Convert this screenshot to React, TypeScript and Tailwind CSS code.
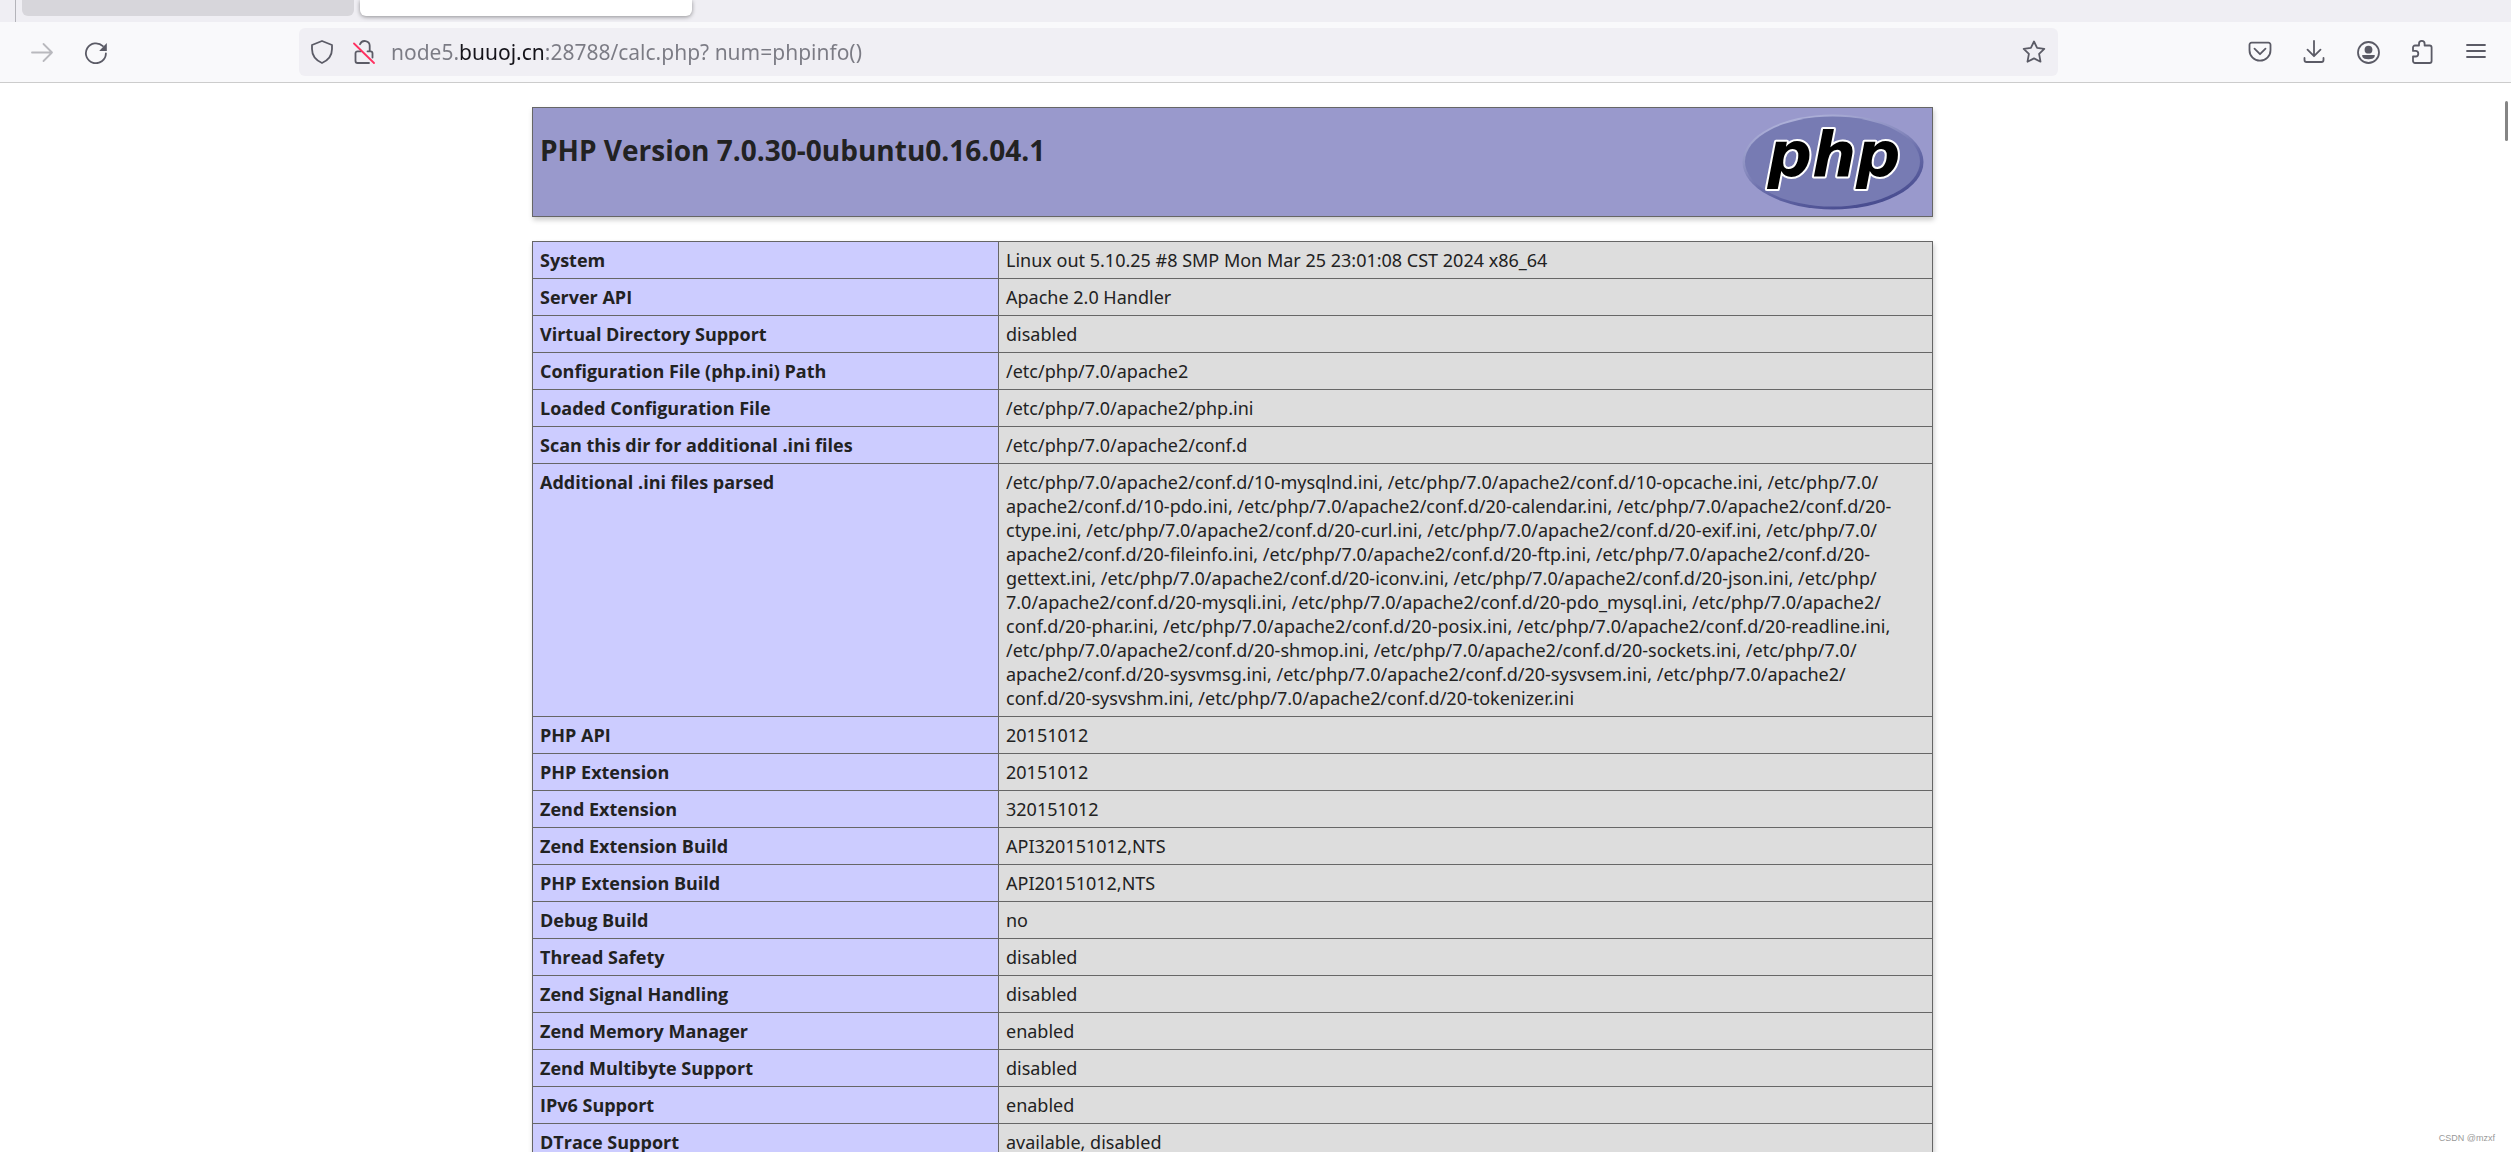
import type { ReactNode } from 'react';

const INI_LINES = [
  '/etc/php/7.0/apache2/conf.d/10-mysqlnd.ini, /etc/php/7.0/apache2/conf.d/10-opcache.ini, /etc/php/7.0/',
  'apache2/conf.d/10-pdo.ini, /etc/php/7.0/apache2/conf.d/20-calendar.ini, /etc/php/7.0/apache2/conf.d/20-',
  'ctype.ini, /etc/php/7.0/apache2/conf.d/20-curl.ini, /etc/php/7.0/apache2/conf.d/20-exif.ini, /etc/php/7.0/',
  'apache2/conf.d/20-fileinfo.ini, /etc/php/7.0/apache2/conf.d/20-ftp.ini, /etc/php/7.0/apache2/conf.d/20-',
  'gettext.ini, /etc/php/7.0/apache2/conf.d/20-iconv.ini, /etc/php/7.0/apache2/conf.d/20-json.ini, /etc/php/',
  '7.0/apache2/conf.d/20-mysqli.ini, /etc/php/7.0/apache2/conf.d/20-pdo_mysql.ini, /etc/php/7.0/apache2/',
  'conf.d/20-phar.ini, /etc/php/7.0/apache2/conf.d/20-posix.ini, /etc/php/7.0/apache2/conf.d/20-readline.ini,',
  '/etc/php/7.0/apache2/conf.d/20-shmop.ini, /etc/php/7.0/apache2/conf.d/20-sockets.ini, /etc/php/7.0/',
  'apache2/conf.d/20-sysvmsg.ini, /etc/php/7.0/apache2/conf.d/20-sysvsem.ini, /etc/php/7.0/apache2/',
  'conf.d/20-sysvshm.ini, /etc/php/7.0/apache2/conf.d/20-tokenizer.ini',
];

const ROWS: { label: string; lines: string[] }[] = [
  { label: 'System', lines: ['Linux out 5.10.25 #8 SMP Mon Mar 25 23:01:08 CST 2024 x86_64'] },
  { label: 'Server API', lines: ['Apache 2.0 Handler'] },
  { label: 'Virtual Directory Support', lines: ['disabled'] },
  { label: 'Configuration File (php.ini) Path', lines: ['/etc/php/7.0/apache2'] },
  { label: 'Loaded Configuration File', lines: ['/etc/php/7.0/apache2/php.ini'] },
  { label: 'Scan this dir for additional .ini files', lines: ['/etc/php/7.0/apache2/conf.d'] },
  { label: 'Additional .ini files parsed', lines: INI_LINES },
  { label: 'PHP API', lines: ['20151012'] },
  { label: 'PHP Extension', lines: ['20151012'] },
  { label: 'Zend Extension', lines: ['320151012'] },
  { label: 'Zend Extension Build', lines: ['API320151012,NTS'] },
  { label: 'PHP Extension Build', lines: ['API20151012,NTS'] },
  { label: 'Debug Build', lines: ['no'] },
  { label: 'Thread Safety', lines: ['disabled'] },
  { label: 'Zend Signal Handling', lines: ['disabled'] },
  { label: 'Zend Memory Manager', lines: ['enabled'] },
  { label: 'Zend Multibyte Support', lines: ['disabled'] },
  { label: 'IPv6 Support', lines: ['enabled'] },
  { label: 'DTrace Support', lines: ['available, disabled'] },
];

function Icon({ children }: { children: ReactNode }) {
  return (
    <svg
      viewBox="0 0 24 24"
      className="block size-6"
      fill="none"
      stroke="currentColor"
      strokeWidth="1.8"
      strokeLinecap="round"
      strokeLinejoin="round"
      aria-hidden="true"
    >
      {children}
    </svg>
  );
}

function IconButton({ label, children, disabled }: { label: string; children: ReactNode; disabled?: boolean }) {
  return (
    <button type="button" aria-label={label} disabled={disabled} className="shrink-0 text-[#5b5b66] disabled:text-[#b9b9be]">
      <Icon>{children}</Icon>
    </button>
  );
}

function TabStrip() {
  return (
    <div className="flex h-[22px] bg-[#efeef3] pl-[15px]">
      <div className="w-px bg-[#b4b4ba]" />
      <div className="ml-1.5 h-4 w-[332px] rounded-b-md bg-[#d7d6db]" />
      <div className="ml-1.5 h-4 w-[332px] rounded-b-md bg-white shadow-[0_1px_4px_rgba(0,0,0,0.4)]" />
    </div>
  );
}

function Toolbar() {
  return (
    <div className="flex h-[61px] items-center border-b border-[#cccccc] bg-[#f9f9fb] pr-[23px] pl-[30px]">
      <div className="flex w-[269px] shrink-0 gap-[30px]">
        <IconButton label="Forward" disabled>
          <path d="M2 12.5h20M13.5 4l8.5 8.500-8.500 8.500" />
        </IconButton>
        <IconButton label="Reload">
          <path d="M21.9 13.5a10 9.900 0 1 1-3-7.300" />
          <path d="M22.8 3v8H15.200z" fill="currentColor" stroke="none" />
        </IconButton>
      </div>

      <form
        className="mr-[190px] flex h-12 flex-1 items-center rounded-md bg-[#f0eff4] pr-3 pl-[11px]"
        onSubmit={(e) => e.preventDefault()}
      >
        <div className="flex shrink-0 gap-[18px]">
          <IconButton label="Tracking protection">
            <path d="M12 1 22 5v4c0 7-4.500 11.500-10 14C6.500 20.500 2 16 2 9V5z" />
          </IconButton>
          <IconButton label="Connection is not secure">
            <path d="M8 4.200a5 4.800 0 0 1 9.700 1.600V11" />
            <path d="M9 11.300H5.500a2 2 0 0 0-2 2V21a2 2 0 0 0 2 2H17M15.500 11.300h3a2 2 0 0 1 2 2V17.500" />
            <path d="M2 3.500 22 23" stroke="#ff3060" />
          </IconButton>
        </div>
        <input
          type="text"
          aria-label="Address"
          defaultValue="node5.buuoj.cn:28788/calc.php? num=phpinfo()"
          className="ml-[15px] h-8 min-w-0 flex-1 bg-[linear-gradient(to_right,#7b7b84_69px,#15141a_69px,#15141a_155px,#7b7b84_155px)] bg-clip-text text-[21px] text-transparent outline-none"
        />
        <IconButton label="Bookmark this page">
          <path d="m12 1.500 3.100 6.400 7.200 1-5.200 5 1.400 7.800-6.500-3.300-6.500 3.300 1.400-7.800-5.200-5 7.200-1z" />
        </IconButton>
      </form>

      <div className="flex shrink-0 gap-[30px]">
        <IconButton label="Save to Pocket">
          <path d="M3.500 2.700h17a2 2 0 0 1 2 2v5.500a10.500 10.500 0 0 1-21 0V4.700a2 2 0 0 1 2-2z" />
          <path d="m6.500 8.700 5.500 5.500 5.500-5.500" />
        </IconButton>
        <IconButton label="Downloads">
          <path d="M12 .9v15M5.500 9.700l6.500 6.500 6.500-6.500M2.500 18v2a2 2 0 0 0 2 2h15a2 2 0 0 0 2-2v-2" />
        </IconButton>
        <IconButton label="Account">
          <circle cx="12.500" cy="12.500" r="10.500" />
          <circle cx="12.500" cy="9.700" r="3.900" fill="currentColor" stroke="none" />
          <path d="M6.500 15h12c.8 0 .8 4.300-6 4.300s-6.800-4.300-6-4.300z" fill="currentColor" stroke="none" />
        </IconButton>
        <IconButton label="Extensions">
          <path d="M3 7.500a2 2 0 0 1 2-2h4V3.700a2.800 2.800 0 0 1 5.600 0v1.800h5a2 2 0 0 1 2 2V21a2 2 0 0 1-2 2H5a2 2 0 0 1-2-2v-4.500h2.500a2.800 2.800 0 0 0 0-5.600H3z" />
        </IconButton>
        <IconButton label="Menu">
          <path d="M3 5h18M3 11h18M3 17h18" />
        </IconButton>
      </div>
    </div>
  );
}

function PhpLogo() {
  return (
    <svg viewBox="0 0 182 96" className="h-24 w-[182px] shrink-0" role="img" aria-label="PHP logo">
      <defs>
        <linearGradient id="rim" x1="0.25" y1="0" x2="0.75" y2="1">
          <stop offset="0" stopColor="#b3b6dc" />
          <stop offset="0.4" stopColor="#8689bd" />
          <stop offset="0.6" stopColor="#666aa8" />
          <stop offset="1" stopColor="#44488c" />
        </linearGradient>
      </defs>
      <ellipse cx="91" cy="48" rx="90.5" ry="47.5" fill="url(#rim)" />
      <ellipse cx="90.5" cy="47.5" rx="87.5" ry="45" fill="#777bb3" />
      <text
        x="92"
        y="62"
        textAnchor="middle"
        className="font-['DejaVu_Sans'] text-[62px] font-bold italic"
        fill="#000000"
        stroke="#ffffff"
        strokeWidth="4"
        strokeLinejoin="round"
        paintOrder="stroke"
      >
        php
      </text>
    </svg>
  );
}

export default function App() {
  return (
    <div className="relative flex h-screen flex-col overflow-hidden bg-white font-['Noto_Sans','Open_Sans',sans-serif] text-[#222222]">
      <TabStrip />
      <Toolbar />

      <main className="min-h-0 flex-1 pt-6 pr-[46px] text-lg leading-6">
        <div className="mx-auto w-[1401px] max-w-full">
          <header className="flex items-start justify-between border border-[#666666] bg-[#9999cc] py-1.5 pr-2 pl-[7px] shadow-[1px_3px_5px_#cccccc]">
            <h1 className="mt-[18px] font-['Open_Sans',sans-serif] text-[28px] leading-9 font-bold">
              PHP Version 7.0.30-0ubuntu0.16.04.1
            </h1>
            <PhpLogo />
          </header>

          <table className="mt-6 w-full table-fixed border-collapse shadow-[1px_3px_5px_#cccccc]">
            <tbody>
              {ROWS.map((row) => (
                <tr key={row.label}>
                  <th
                    scope="row"
                    className="w-[466px] border border-[#666666] bg-[#ccccff] px-[7px] py-1.5 text-left align-top font-['Open_Sans',sans-serif] font-bold"
                  >
                    {row.label}
                  </th>
                  <td className="border border-[#666666] bg-[#dddddd] px-[7px] py-1.5 align-top">
                    {row.lines.map((line) => (
                      <span key={line} className="block whitespace-nowrap">
                        {line}
                      </span>
                    ))}
                  </td>
                </tr>
              ))}
            </tbody>
          </table>
        </div>
      </main>

      {/* scrollbar thumb */}
      <div className="absolute top-[101px] right-[3px] h-10 w-[3px] rounded-full bg-[#858585]" />
      <span className="absolute right-4 bottom-2 font-['Liberation_Sans',sans-serif] text-[9px] leading-3 text-[#999999]">
        CSDN @mzxf
      </span>
    </div>
  );
}
